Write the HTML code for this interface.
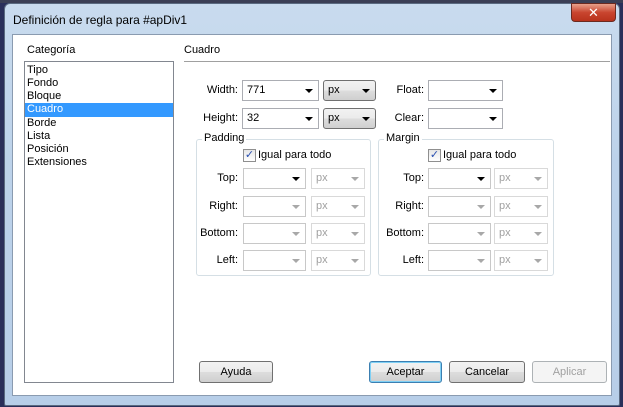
<!DOCTYPE html>
<html><head><meta charset="utf-8"><style>
*{margin:0;padding:0;box-sizing:border-box}
body{width:623px;height:407px;overflow:hidden;background:#2a2f5a;font-family:"Liberation Sans","DejaVu Sans",sans-serif;font-size:11px;color:#000;position:relative}
.a{position:absolute}
.frame{left:4px;top:3px;width:616px;height:403px;background:linear-gradient(#c9dbee,#bcd2ea 40%,#b7cee8);border:1px solid #5a6a80;border-radius:6px 6px 2px 2px}
.title{left:13px;top:13px;font-size:12px;color:#000}
.close{left:571px;top:3px;width:45px;height:19px;border-radius:0 0 4px 4px;background:linear-gradient(#e8a08a,#c9452f 50%,#b8321c);border:1px solid #6b2a20;color:#fff;text-align:center;font-weight:bold;font-size:13px;line-height:17px}
.client{left:12px;top:34px;width:600px;height:362px;background:#fff;border:1px solid #8a9bb0}
.lbl{font-size:11px}
.list{left:24px;top:61px;width:150px;height:322px;border:1px solid #828790;background:#fff;padding-top:2px}
.list div{height:13px;line-height:13px;padding-left:2px;font-size:11px}
.list div.sel{height:14px}
.sel{background:#3399ff;color:#fff}
.inp{position:absolute;height:21px;border:1px solid #abadb3;background:#fff;padding-left:4px;line-height:19px;font-size:11px}
.dis{border-color:#d9d9d9;color:#a0a0a0}
.arr{position:absolute;right:5px;top:8px;width:0;height:0;border-left:4px solid transparent;border-right:4px solid transparent;border-top:4px solid #000}
.dis .arr,.g .arr{border-top-color:#a8a8a8}
.btnsel{position:absolute;height:21px;border:1px solid #707070;border-radius:3px;background:linear-gradient(#f2f2f2,#ebebeb 50%,#dddddd 51%,#cfcfcf);padding-left:4px;line-height:19px}
.grp{position:absolute;border:1px solid #d5dfe5;border-radius:3px}
.grp span{position:absolute;top:-8px;left:5px;background:#fff;padding:0 2px}
.rl{position:absolute;text-align:right;width:60px;line-height:21px}
.cb{position:absolute;width:13px;height:13px;border:1px solid #8f8f8f;background:linear-gradient(#e6e6e6,#fff);font-size:11px;line-height:11px;text-align:center;color:#2a4fb0;font-weight:bold}
.btn{position:absolute;top:361px;height:22px;border:1px solid #707070;border-radius:3px;background:linear-gradient(#f2f2f2,#ebebeb 50%,#dddddd 51%,#cfcfcf);text-align:center;line-height:20px;font-size:11px}
</style></head><body>
<div class="a" style="left:0;top:0;width:623px;height:3px;background:#3b3f55"></div>
<div class="a frame"></div>
<div class="a title">Definición de regla para #apDiv1</div>
<div class="a close">✕</div>
<div class="a client"></div>
<div class="a lbl" style="left:27px;top:44px">Categoría</div>
<div class="a lbl" style="left:184px;top:44px">Cuadro</div>
<div class="a" style="left:184px;top:61px;width:426px;height:1px;background:#a0a0a0"></div>
<div class="a list"><div>Tipo</div><div>Fondo</div><div>Bloque</div><div class="sel">Cuadro</div><div>Borde</div><div>Lista</div><div>Posición</div><div>Extensiones</div></div>

<div class="rl" style="left:178px;top:80px">Width:</div>
<div class="inp" style="left:242px;top:80px;width:77px">771<i class="arr"></i></div>
<div class="btnsel" style="left:323px;top:80px;width:53px">px<i class="arr"></i></div>
<div class="rl" style="left:364px;top:80px">Float:</div>
<div class="inp" style="left:428px;top:80px;width:75px"><i class="arr"></i></div>

<div class="rl" style="left:178px;top:108px">Height:</div>
<div class="inp" style="left:242px;top:108px;width:77px">32<i class="arr"></i></div>
<div class="btnsel" style="left:323px;top:108px;width:53px">px<i class="arr"></i></div>
<div class="rl" style="left:364px;top:108px">Clear:</div>
<div class="inp" style="left:428px;top:108px;width:75px"><i class="arr"></i></div>

<div class="grp" style="left:196px;top:139px;width:175px;height:137px"><span>Padding</span></div>
<div class="cb" style="left:243px;top:149px">✓</div>
<div class="a" style="left:258px;top:149px">Igual para todo</div>
<div class="grp" style="left:378px;top:139px;width:176px;height:137px"><span>Margin</span></div>
<div class="cb" style="left:428px;top:149px">✓</div>
<div class="a" style="left:443px;top:149px">Igual para todo</div>

<div class="rl" style="left:178px;top:168px">Top:</div>
<div class="inp" style="left:243px;top:168px;width:63px;border-color:#c8c8c8"><i class="arr"></i></div>
<div class="inp dis" style="left:311px;top:168px;width:54px">px<i class="arr"></i></div>
<div class="rl" style="left:364px;top:168px">Top:</div>
<div class="inp" style="left:428px;top:168px;width:63px;border-color:#c8c8c8"><i class="arr"></i></div>
<div class="inp dis" style="left:494px;top:168px;width:54px">px<i class="arr"></i></div>

<div class="rl" style="left:178px;top:196px">Right:</div>
<div class="inp g" style="left:243px;top:196px;width:63px;border-color:#c8c8c8"><i class="arr"></i></div>
<div class="inp dis" style="left:311px;top:196px;width:54px">px<i class="arr"></i></div>
<div class="rl" style="left:364px;top:196px">Right:</div>
<div class="inp g" style="left:428px;top:196px;width:63px;border-color:#c8c8c8"><i class="arr"></i></div>
<div class="inp dis" style="left:494px;top:196px;width:54px">px<i class="arr"></i></div>

<div class="rl" style="left:178px;top:223px">Bottom:</div>
<div class="inp g" style="left:243px;top:223px;width:63px;border-color:#c8c8c8"><i class="arr"></i></div>
<div class="inp dis" style="left:311px;top:223px;width:54px">px<i class="arr"></i></div>
<div class="rl" style="left:364px;top:223px">Bottom:</div>
<div class="inp g" style="left:428px;top:223px;width:63px;border-color:#c8c8c8"><i class="arr"></i></div>
<div class="inp dis" style="left:494px;top:223px;width:54px">px<i class="arr"></i></div>

<div class="rl" style="left:178px;top:250px">Left:</div>
<div class="inp g" style="left:243px;top:250px;width:63px;border-color:#c8c8c8"><i class="arr"></i></div>
<div class="inp dis" style="left:311px;top:250px;width:54px">px<i class="arr"></i></div>
<div class="rl" style="left:364px;top:250px">Left:</div>
<div class="inp g" style="left:428px;top:250px;width:63px;border-color:#c8c8c8"><i class="arr"></i></div>
<div class="inp dis" style="left:494px;top:250px;width:54px">px<i class="arr"></i></div>

<div class="btn" style="left:199px;width:74px">Ayuda</div>
<div class="btn" style="left:369px;width:73px;border-color:#3c7fb1;box-shadow:inset 0 0 0 1px #7fd0f5">Aceptar</div>
<div class="btn" style="left:449px;width:76px">Cancelar</div>
<div class="btn" style="left:532px;width:75px;border-color:#adb2b5;background:#f4f4f4;color:#a0a0a0">Aplicar</div>
</body></html>
